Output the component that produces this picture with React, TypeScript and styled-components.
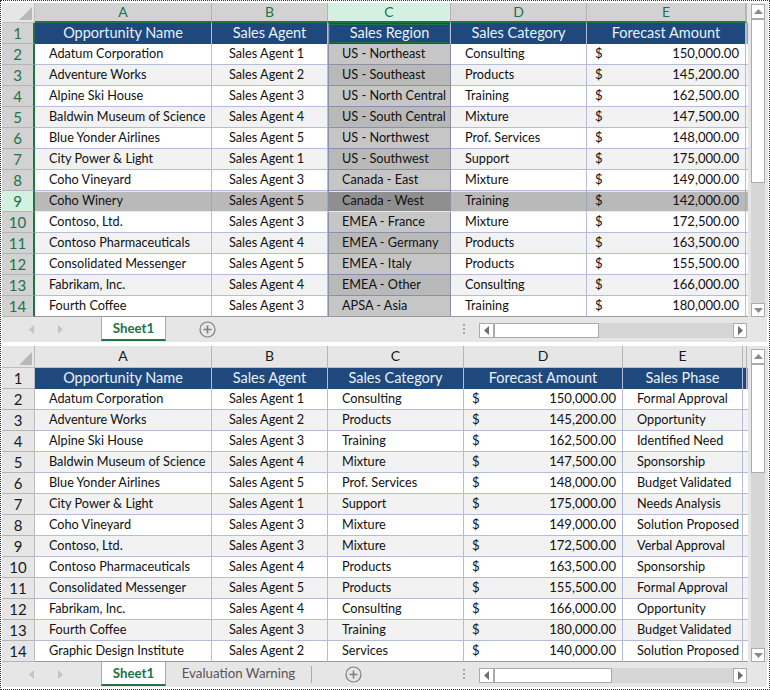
import React from "react";
import styled, { createGlobalStyle } from "styled-components";

const Global = createGlobalStyle`
  html, body { margin: 0; padding: 0; background: #fff; }
  #root { width: 770px; height: 690px; }
`;

const Frame = styled.div`
  width: 770px;
  height: 690px;
  box-sizing: border-box;
  border: 1px dotted #333;
  padding: 2px 2px 2px 1px;
  display: flex;
  flex-direction: column;
  gap: 4px;
  background: #fff;
  font-family: "Lato", "Noto Sans", sans-serif;
  overflow: hidden;
`;

const Workbook = styled.section<{ $h: number }>`
  display: flex;
  flex-direction: column;
  flex: none;
  height: ${(p) => p.$h}px;
  background: #e6e6e6;
`;

const Pane = styled.div`
  display: flex;
  flex: none;
`;

const GridArea = styled.div`
  width: 746px;
  flex: none;
  overflow: hidden;
  box-sizing: border-box;
  background: #e6e6e6;
`;

const GridRow = styled.div<{ $cols: string; $h: number }>`
  display: grid;
  grid-template-columns: ${(p) => p.$cols};
  height: ${(p) => p.$h}px;
`;

const BodyRow = styled(GridRow)`
  background: #9a9a9a;
`;

const Corner = styled.div`
  background: #e6e6e6;
  border-right: 1px solid #bdbdbd;
  border-bottom: 1px solid #bdbdbd;
  display: flex;
  align-items: flex-end;
  justify-content: flex-end;
  padding: 0 2px 2px 0;
  box-sizing: border-box;
`;

const ColHead = styled.div<{ $sel?: boolean; $active?: boolean; $lh: number }>`
  box-sizing: border-box;
  background: ${(p) => (p.$sel ? "#d3f0e0" : p.$active ? "#d2d2d2" : "#e6e6e6")};
  color: ${(p) => (p.$sel || p.$active ? "#217346" : "#1a1a1a")};
  border-right: 1px solid #b5b5b5;
  border-bottom: ${(p) => (p.$sel || p.$active ? "2px solid #217346" : "1px solid #bdbdbd")};
  font-size: 14px;
  text-align: center;
  line-height: ${(p) => p.$lh}px;
`;

const RowHead = styled.div<{ $sel?: boolean; $active?: boolean }>`
  box-sizing: border-box;
  background: ${(p) => (p.$sel ? "#d3f0e0" : p.$active ? "#d2d2d2" : "#e6e6e6")};
  color: ${(p) => (p.$sel || p.$active ? "#217346" : "#1a1a1a")};
  border-right: ${(p) => (p.$active || p.$sel ? "2px solid #217346" : "1px solid #bdbdbd")};
  border-bottom: 1px solid #b5b5b5;
  font-size: 15px;
  text-align: center;
  line-height: 20px;
`;

const Th = styled.div<{ $sel?: boolean }>`
  box-sizing: border-box;
  background: #1f497d;
  color: #e9f0f8;
  font-size: 14.5px;
  text-align: center;
  line-height: 20px;
  white-space: nowrap;
  border-right: 1px solid #b4bcd8;
  ${(p) => (p.$sel ? "outline: 1px solid #217346; outline-offset: -2px; border-left: 1px solid #8b8fa8;" : "")}
`;

const tone = (t: string) =>
  ({ white: "#fff", alt: "#f2f2f2", col: "#c6c6c6", colAlt: "#b9b9b9", row: "#b9b9b9", both: "#8f8f8f" }[t] as string);

const Td = styled.div<{ $tone: string; $dark?: boolean; $pad?: number; $hot?: boolean; $end?: boolean }>`
  box-sizing: border-box;
  background: ${(p) => tone(p.$tone)};
  color: #111;
  font-size: 12.7px;
  line-height: 19px;
  padding-left: ${(p) => p.$pad ?? 14}px;
  padding-right: 6px;
  white-space: nowrap;
  overflow: hidden;
  border-right: 1px solid ${(p) => (p.$dark ? "#8b8fa8" : p.$hot ? "#a3a6b6" : "#b4bcd8")};
  border-bottom: 1px solid ${(p) => (p.$hot ? "#e8e8e8" : p.$end ? "#9a9a9a" : p.$dark ? "#8b8fa8" : "#b4bcd8")};
  ${(p) => (p.$dark ? `border-left: 1px solid #8b8fa8; padding-left: ${(p.$pad ?? 14) - 1}px;` : "")}
  ${(p) => (p.$hot ? "box-shadow: inset 0 1px 0 #e8e8e8;" : "")}
`;

const Money = styled(Td)`
  display: flex;
  justify-content: space-between;
  font-size: 13.1px;
`;

const VBar = styled.div<{ $top: number }>`
  width: 20px;
  flex: none;
  box-sizing: border-box;
  padding: ${(p) => p.$top}px 3px 0 3px;
  display: flex;
  flex-direction: column;
  align-items: stretch;
  background: #e6e6e6;
`;

const VTrack = styled.div`
  flex: 1;
  background: #d6d6d6;
  display: flex;
  flex-direction: column;
`;

const VThumb = styled.div<{ $h: number }>`
  height: ${(p) => p.$h}px;
  box-sizing: border-box;
  background: #fff;
  border: 1px solid #ababab;
`;

const ArrowBtn = styled.button<{ $w: number; $h: number }>`
  width: ${(p) => p.$w}px;
  height: ${(p) => p.$h}px;
  flex: none;
  padding: 0;
  margin: 0;
  box-sizing: border-box;
  background: #fff;
  border: 1px solid #ababab;
  display: flex;
  align-items: center;
  justify-content: center;
`;

const TabStrip = styled.div`
  flex: 1;
  display: flex;
  align-items: flex-start;
  background: #e6e6e6;
`;

const NavArrows = styled.div`
  width: 99px;
  flex: none;
  height: 24px;
  display: flex;
  align-items: center;
  gap: 24px;
  padding-left: 27px;
  box-sizing: border-box;
`;

const ActiveTab = styled.div`
  width: 65px;
  height: 24px;
  flex: none;
  box-sizing: border-box;
  background: #fff;
  border-left: 1px solid #ababab;
  border-right: 1px solid #ababab;
  border-bottom: 2px solid #217346;
  color: #217346;
  font-weight: 700;
  font-size: 13.3px;
  text-align: center;
  line-height: 22px;
`;

const PlainTab = styled.div`
  width: 146px;
  margin-top: 4px;
  height: 17px;
  flex: none;
  box-sizing: border-box;
  border-right: 1px solid #ababab;
  color: #555;
  font-size: 13.3px;
  text-align: center;
  line-height: 15px;
`;

const AddBtn = styled.div`
  margin: 4px 0 0 33px;
  flex: none;
  display: flex;
`;

const Grip = styled.div<{ $left: number }>`
  margin-left: ${(p) => p.$left}px;
  margin-top: 7px;
  width: 2px;
  height: 10px;
  flex: none;
  background: repeating-linear-gradient(to bottom, #a8a8a8 0 2px, transparent 2px 4px);
`;

const HBar = styled.div`
  margin-left: 14px;
  margin-top: 6px;
  width: 268px;
  height: 15px;
  flex: none;
  display: flex;
`;

const HTrack = styled.div`
  flex: 1;
  background: #d6d6d6;
  display: flex;
`;

const HThumb = styled.div<{ $w: number }>`
  width: ${(p) => p.$w}px;
  height: 15px;
  box-sizing: border-box;
  background: #fff;
  border: 1px solid #ababab;
`;

const Tri = ({ dir, color = "#6e6e6e" }: { dir: "u" | "d" | "l" | "r"; color?: string }) => {
  const pts = { u: "0,5 9,5 4.5,0", d: "0,0 9,0 4.5,5", l: "5,0 5,9 0,4.5", r: "0,0 0,9 5,4.5" }[dir];
  const vert = dir === "u" || dir === "d";
  return (
    <svg width={vert ? 9 : 5} height={vert ? 5 : 9}>
      <polygon points={pts} fill={color} />
    </svg>
  );
};

const CornerMark = () => (
  <svg width="13" height="13">
    <polygon points="13,0 13,13 0,13" fill="#b8b8b8" />
  </svg>
);

const PlusCircle = () => (
  <svg width="17" height="17" viewBox="0 0 17 17">
    <circle cx="8.5" cy="8.5" r="7.5" fill="none" stroke="#808080" strokeWidth="1.2" />
    <path d="M8.5 4.5v8M4.5 8.5h8" stroke="#808080" strokeWidth="1.6" />
  </svg>
);

const top: string[][] = [
  ["Adatum Corporation","Sales Agent 1","US - Northeast","Consulting","150,000.00"],
  ["Adventure Works","Sales Agent 2","US - Southeast","Products","145,200.00"],
  ["Alpine Ski House","Sales Agent 3","US - North Central","Training","162,500.00"],
  ["Baldwin Museum of Science","Sales Agent 4","US - South Central","Mixture","147,500.00"],
  ["Blue Yonder Airlines","Sales Agent 5","US - Northwest","Prof. Services","148,000.00"],
  ["City Power & Light","Sales Agent 1","US - Southwest","Support","175,000.00"],
  ["Coho Vineyard","Sales Agent 3","Canada - East","Mixture","149,000.00"],
  ["Coho Winery","Sales Agent 5","Canada - West","Training","142,000.00"],
  ["Contoso, Ltd.","Sales Agent 3","EMEA - France","Mixture","172,500.00"],
  ["Contoso Pharmaceuticals","Sales Agent 4","EMEA - Germany","Products","163,500.00"],
  ["Consolidated Messenger","Sales Agent 5","EMEA - Italy","Products","155,500.00"],
  ["Fabrikam, Inc.","Sales Agent 4","EMEA - Other","Consulting","166,000.00"],
  ["Fourth Coffee","Sales Agent 3","APSA - Asia","Training","180,000.00"],
];

const bottom: string[][] = [
  ["Adatum Corporation","Sales Agent 1","Consulting","150,000.00","Formal Approval"],
  ["Adventure Works","Sales Agent 2","Products","145,200.00","Opportunity"],
  ["Alpine Ski House","Sales Agent 3","Training","162,500.00","Identified Need"],
  ["Baldwin Museum of Science","Sales Agent 4","Mixture","147,500.00","Sponsorship"],
  ["Blue Yonder Airlines","Sales Agent 5","Prof. Services","148,000.00","Budget Validated"],
  ["City Power & Light","Sales Agent 1","Support","175,000.00","Needs Analysis"],
  ["Coho Vineyard","Sales Agent 3","Mixture","149,000.00","Solution Proposed"],
  ["Contoso, Ltd.","Sales Agent 3","Mixture","172,500.00","Verbal Approval"],
  ["Contoso Pharmaceuticals","Sales Agent 4","Products","163,500.00","Sponsorship"],
  ["Consolidated Messenger","Sales Agent 5","Products","155,500.00","Formal Approval"],
  ["Fabrikam, Inc.","Sales Agent 4","Consulting","166,000.00","Opportunity"],
  ["Fourth Coffee","Sales Agent 3","Training","180,000.00","Budget Validated"],
  ["Graphic Design Institute","Sales Agent 2","Services","140,000.00","Solution Proposed"],
];

type SheetProps = {
  cols: string;
  headH: number;
  letters: string[];
  titles: string[];
  rows: string[][];
  moneyIdx: number;
  selected?: boolean;
  thumbV: number;
  barTop: number;
};

const Sheet = ({ cols, headH, letters, titles, rows, moneyIdx, selected, thumbV, barTop }: SheetProps) => (
  <Pane>
    <GridArea>
      <GridRow $cols={cols} $h={headH}>
        <Corner><CornerMark /></Corner>
        {letters.map((l, i) => (
          <ColHead key={l} $lh={headH - 2} $sel={selected && i === 2} $active={selected && i !== 2}>{l}</ColHead>
        ))}
        <ColHead $lh={headH - 2} $active={selected} />
      </GridRow>
      <BodyRow $cols={cols} $h={21}>
        <RowHead $active={selected}>1</RowHead>
        {titles.map((t, i) => (
          <Th key={t} $sel={selected && i === 2}>{t}</Th>
        ))}
        <Th />
      </BodyRow>
      {rows.map((r, ri) => {
        const hot = selected && ri === 7;
        const end = ri === rows.length - 1;
        return (
          <BodyRow key={ri} $cols={cols} $h={21}>
            <RowHead $active={selected && !hot} $sel={hot}>{ri + 2}</RowHead>
            {r.map((v, ci) => {
              const inCol = selected && ci === 2;
              const t = hot && inCol ? "both" : hot ? "row" : inCol ? (ri % 2 ? "colAlt" : "col") : ri % 2 ? "alt" : "white";
              return ci === moneyIdx ? (
                <Money key={ci} $tone={t} $pad={8} $hot={hot} $end={end}>
                  <span>$</span>
                  <span>{v}</span>
                </Money>
              ) : (
                <Td key={ci} $tone={t} $dark={inCol} $hot={hot} $end={end} $pad={ci === 1 ? 17 : 14}>{v}</Td>
              );
            })}
            <Td $tone={hot ? "row" : ri % 2 ? "alt" : "white"} $hot={hot} $end={end} $pad={0} />
          </BodyRow>
        );
      })}
    </GridArea>
    <VBar $top={barTop}>
      <ArrowBtn $w={14} $h={15}><Tri dir="u" color="#8a8a8a" /></ArrowBtn>
      <VTrack><VThumb $h={thumbV} /></VTrack>
      <ArrowBtn $w={14} $h={14}><Tri dir="d" color="#8a8a8a" /></ArrowBtn>
    </VBar>
  </Pane>
);

const Strip = ({ extra, thumbH }: { extra?: boolean; thumbH: number }) => (
  <TabStrip>
    <NavArrows>
      <Tri dir="l" color="#c4c4c4" />
      <Tri dir="r" color="#c4c4c4" />
    </NavArrows>
    <ActiveTab>Sheet1</ActiveTab>
    {extra && <PlainTab>Evaluation Warning</PlainTab>}
    <AddBtn><PlusCircle /></AddBtn>
    <Grip $left={extra ? 101 : 247} />
    <HBar>
      <ArrowBtn $w={15} $h={15}><Tri dir="l" /></ArrowBtn>
      <HTrack><HThumb $w={thumbH} /></HTrack>
      <ArrowBtn $w={14} $h={15}><Tri dir="r" /></ArrowBtn>
    </HBar>
  </TabStrip>
);

export default function App() {
  return (
    <Frame>
      <Global />
      <Workbook $h={339}>
        <Sheet
          cols="33px 177px 116px 123px 136px 159px 1px"
          headH={20}
          letters={["A", "B", "C", "D", "E"]}
          titles={["Opportunity Name", "Sales Agent", "Sales Region", "Sales Category", "Forecast Amount"]}
          rows={top}
          moneyIdx={4}
          selected
          thumbV={164}
          barTop={1}
        />
        <Strip thumbH={105} />
      </Workbook>
      <Workbook $h={341}>
        <Sheet
          cols="33px 177px 116px 136px 159px 120px 4px"
          headH={22}
          letters={["A", "B", "C", "D", "E"]}
          titles={["Opportunity Name", "Sales Agent", "Sales Category", "Forecast Amount", "Sales Phase"]}
          rows={bottom}
          moneyIdx={3}
          thumbV={109}
          barTop={3}
        />
        <Strip extra thumbH={118} />
      </Workbook>
    </Frame>
  );
}
